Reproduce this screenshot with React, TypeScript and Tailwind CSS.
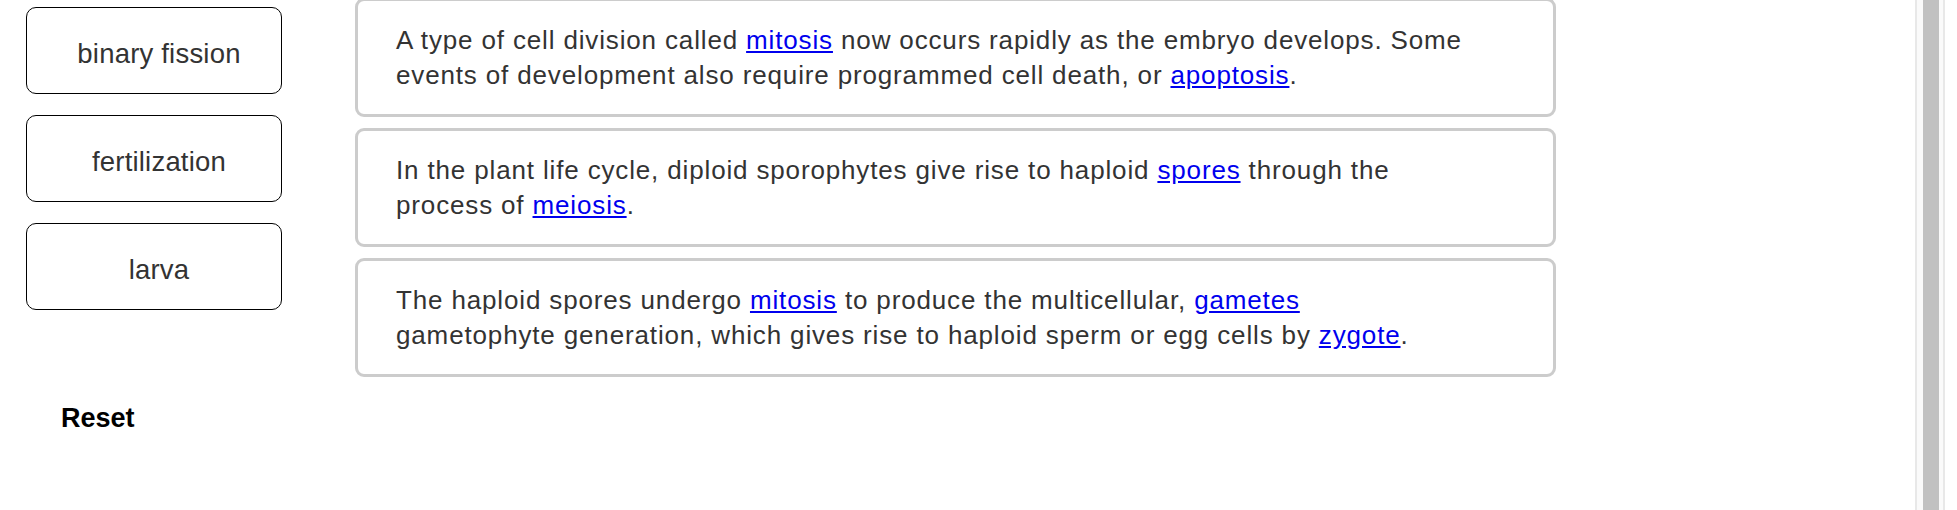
import React from "react";

const font = { fontFamily: '"Liberation Sans", Arial, Helvetica, sans-serif' };

function L({ children }: { children: React.ReactNode }) {
  return <a className="text-[#0000ee] underline cursor-pointer">{children}</a>;
}

function Term({ label }: { label: string }) {
  return (
    <div className="h-[87px] w-[256px] border-[1.5px] border-black rounded-[10px] flex items-center justify-center pt-[6px] pl-[10px] text-[27.5px] leading-[32px] tracking-[0.2px] text-[#333333] bg-white">
      {label}
    </div>
  );
}

function Card({ children }: { children: React.ReactNode }) {
  return (
    <div className="w-[1201px] h-[119px] border-[3px] border-[#cccccc] rounded-[9px] pl-[38px] pt-[22px] text-[26px] leading-[34.5px] tracking-[0.85px] text-[#333333] bg-white">
      {children}
    </div>
  );
}

export default function App() {
  return (
    <div className="w-[1957px] h-[510px] bg-white flex overflow-hidden" style={font}>
      <div className="flex flex-col pl-[26px] pt-[7px]">
        <div className="flex flex-col gap-[21px]">
          <Term label="binary fission" />
          <Term label="fertilization" />
          <Term label="larva" />
        </div>
        <div className="mt-[95px] pl-[35px] text-[27px] leading-[27px] font-bold text-black">Reset</div>
      </div>
      <div className="ml-[73px] flex flex-col gap-[11px] -mt-[2px]">
        <Card>
          A type of cell division called <L>mitosis</L> now occurs rapidly as the embryo develops. Some
          <br />
          events of development also require programmed cell death, or <L>apoptosis</L>.
        </Card>
        <Card>
          In the plant life cycle, diploid sporophytes give rise to haploid <L>spores</L> through the
          <br />
          process of <L>meiosis</L>.
        </Card>
        <Card>
          The haploid spores undergo <L>mitosis</L> to produce the multicellular, <L>gametes</L>
          <br />
          gametophyte generation, which gives rise to haploid sperm or egg cells by <L>zygote</L>.
        </Card>
      </div>
      <div className="ml-auto mr-[12px] h-full w-[30px] flex">
        <div className="w-[2px] h-full bg-[#e8e8e8]" />
        <div className="w-[6px] h-full bg-[#fafafa]" />
        <div className="w-[16px] h-full bg-[#c1c1c1]" />
        <div className="w-[4px] h-full bg-[#fafafa]" />
        <div className="w-[2px] h-full bg-[#e8e8e8]" />
      </div>
    </div>
  );
}
